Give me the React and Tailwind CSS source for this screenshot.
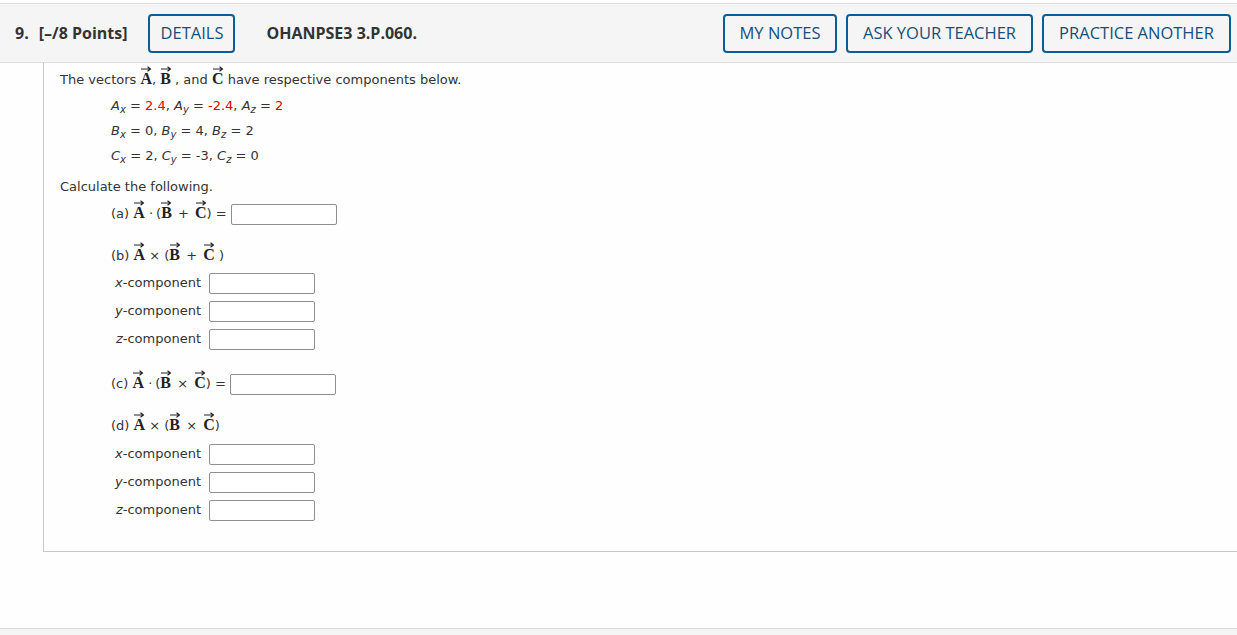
import React from 'react';

function Vec({ letter }) {
  return (
    <span className="relative inline-block font-['Liberation_Serif',serif] text-[16px] font-bold leading-none text-[#222]">
      {letter}
      <svg
        className="absolute left-1/2 top-[-5px] -translate-x-1/2"
        width="11"
        height="6"
        viewBox="0 0 11 6"
      >
        <path d="M0.5 3 H9.5 M7 0.8 L10 3 L7 5.2" fill="none" stroke="#222" strokeWidth="1.1" />
      </svg>
    </span>
  );
}

function Sub({ base, sub }) {
  return (
    <span className="italic">
      {base}
      <sub className="text-[10px]">{sub}</sub>
    </span>
  );
}

function AnswerBox({ className = '' }) {
  return (
    <span
      className={`inline-block h-[21px] w-[106px] rounded-[2px] border border-[#8f8f8f] bg-white align-middle ${className}`}
    />
  );
}

function Op({ children }) {
  return <span className="mx-[2px]">{children}</span>;
}

function ComponentRows({ first }) {
  const rows = ['x', 'y', 'z'];
  return rows.map((axis, i) => (
    <div
      key={axis}
      className={`flex h-[24px] items-center ${i === 0 ? first : 'mt-[4px]'}`}
    >
      <span className="w-[90px] text-right">
        <span className="italic">{axis}</span>-component
      </span>
      <AnswerBox className="ml-[8px]" />
    </div>
  ));
}

function HeaderButton({ children, width }) {
  return (
    <button
      type="button"
      className={`flex h-[39px] items-center justify-center rounded-[4px] border-2 border-[#0b5d96] text-[16.5px] text-[#174f7c] ${width}`}
    >
      {children}
    </button>
  );
}

export default function App() {
  return (
    <div className="flex min-h-[635px] flex-col bg-[#fefefe] text-[#333]">
      <div className="h-[3px]" />
      <header className="flex h-[60px] items-center border-y border-[#dedede] bg-[#f5f5f5] pl-[15px] pr-[6px] font-['Open_Sans',sans-serif]">
        <span className="text-[16px] font-bold text-[#333]">9.</span>
        <span className="ml-[10px] text-[16px] font-bold text-[#333]">[–/8 Points]</span>
        <div className="ml-[21px]">
          <HeaderButton width="w-[87px]">DETAILS</HeaderButton>
        </div>
        <span className="ml-[31px] text-[16px] font-bold text-[#333]">OHANPSE3 3.P.060.</span>
        <div className="ml-auto flex gap-[9px]">
          <HeaderButton width="w-[114px]">MY NOTES</HeaderButton>
          <HeaderButton width="w-[187px]">ASK YOUR TEACHER</HeaderButton>
          <HeaderButton width="w-[189px]">PRACTICE ANOTHER</HeaderButton>
        </div>
      </header>

      <div className="pl-[43px]">
        <section className="h-[489px] border-b border-l border-[#c8c8c8] pl-[16px] pt-[5px] font-['DejaVu_Sans',Verdana,sans-serif] text-[13px] text-[#333]">
          <div className="flex h-[24px] items-center">
            <span className="whitespace-pre">
              The vectors <Vec letter="A" />, <Vec letter="B" /> , and <Vec letter="C" /> have
              respective components below.
            </span>
          </div>

          <div className="ml-[51px]">
            <div className="mt-[2px] flex h-[24px] items-center">
              <span>
                <Sub base="A" sub="x" /> = <span className="text-[#e00000]">2.4</span>,{' '}
                <Sub base="A" sub="y" /> = <span className="text-[#e00000]">-2.4</span>,{' '}
                <Sub base="A" sub="z" /> = <span className="text-[#e00000]">2</span>
              </span>
            </div>
            <div className="mt-[1px] flex h-[24px] items-center">
              <span>
                <Sub base="B" sub="x" /> = 0, <Sub base="B" sub="y" /> = 4,{' '}
                <Sub base="B" sub="z" /> = 2
              </span>
            </div>
            <div className="mt-[1px] flex h-[24px] items-center">
              <span>
                <Sub base="C" sub="x" /> = 2, <Sub base="C" sub="y" /> = -3,{' '}
                <Sub base="C" sub="z" /> = 0
              </span>
            </div>
          </div>

          <div className="mt-[7px] flex h-[24px] items-center">Calculate the following.</div>

          <div className="ml-[51px]">
            <div className="mt-[3px] flex h-[24px] items-center">
              <span className="whitespace-pre">
                (a) <Vec letter="A" /> ·<span className="ml-[3px]">(</span><Vec letter="B" /> <Op>+</Op> <Vec letter="C" />) ={' '}
                <AnswerBox />
              </span>
            </div>

            <div className="mt-[18px] flex h-[24px] items-center">
              <span className="whitespace-pre">
                (b) <Vec letter="A" /> × (<Vec letter="B" /> <Op>+</Op> <Vec letter="C" /> )
              </span>
            </div>
            <ComponentRows first="mt-[3px]" />

            <div className="mt-[21px] flex h-[24px] items-center">
              <span className="whitespace-pre">
                (c) <Vec letter="A" /> ·<span className="ml-[3px]">(</span><Vec letter="B" /> <Op>×</Op> <Vec letter="C" />) ={' '}
                <AnswerBox />
              </span>
            </div>

            <div className="mt-[18px] flex h-[24px] items-center">
              <span className="whitespace-pre">
                (d) <Vec letter="A" /> × (<Vec letter="B" /> <Op>×</Op> <Vec letter="C" />)
              </span>
            </div>
            <ComponentRows first="mt-[4px]" />
          </div>
        </section>
      </div>

      <div className="h-[76px]" />
      <footer className="flex-1 border-t border-[#dcdcdc] bg-[#f5f5f5]" />
    </div>
  );
}
